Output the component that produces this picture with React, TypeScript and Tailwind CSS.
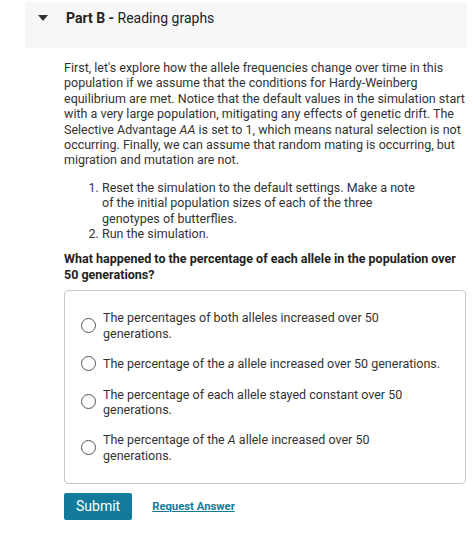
import React from 'react';

const options = [
  <>The percentages of both alleles increased over 50 generations.</>,
  <>The percentage of the <i>a</i> allele increased over 50 generations.</>,
  <>The percentage of each allele stayed constant over 50 generations.</>,
  <>The percentage of the <i>A</i> allele increased over 50 generations.</>,
];

const App: React.FC = () => {
  return (
    <div className="w-[474px] h-[537px] bg-white text-[#333] overflow-hidden" style={{ fontFamily: 'Roboto, "Liberation Sans", sans-serif' }}>
      {/* part header */}
      <div className="ml-[25px] mr-[7px] mt-[2px] h-[46px] bg-[#f7f7f7] flex items-start pt-[6px]">
        <svg className="ml-[13px] mt-[7px] w-[10px] h-[6px]" viewBox="0 0 10 6">
          <path d="M0 0 L10 0 L5 6 Z" fill="#333" />
        </svg>
        <div className="ml-[18px] text-[14px] leading-[20px] text-[#222]">
          <span className="font-bold">Part B -</span> Reading graphs
        </div>
      </div>

      <div className="ml-[64px] w-[406px] mt-[12px] text-[12.5px] leading-[15.4px]">
        <p>
          First, let's explore how the allele frequencies change over time in this population if we assume that
          the conditions for Hardy-Weinberg equilibrium are met. Notice that the default values in the simulation
          start with a very large population, mitigating any effects of genetic drift. The Selective Advantage{' '}
          <i>AA</i> is set to 1, which means natural selection is not occurring. Finally, we can assume that random
          mating is occurring, but migration and mutation are not.
        </p>

        <ol className="list-decimal pl-[38px] pr-[50px] mt-[12px]">
          <li>
            Reset the simulation to the default settings. Make a note of the initial population sizes of each of the
            three genotypes of butterflies.
          </li>
          <li>Run the simulation.</li>
        </ol>

        <p className="font-bold mt-[10px] text-[#222]">
          What happened to the percentage of each allele in the population over 50 generations?
        </p>

        <div className="mt-[8px] mr-[4px] border border-[#c8c8c8] rounded-[4px] pt-[19px] pb-[20px] pl-[16px] pr-[20px] flex flex-col gap-[15px]">
          {options.map((opt, i) => (
            <label key={i} className="flex items-center gap-[7px]">
              <span className="w-[15px] h-[15px] rounded-full border border-[#555] shrink-0 bg-white" />
              <span className="max-w-[338px]">{opt}</span>
            </label>
          ))}
        </div>

        <div className="flex items-center mt-[9px]">
          <button className="bg-[#127b9b] text-white text-[14px] h-[27px] px-[12px] rounded-[2px]">Submit</button>
          <a className="ml-[20px] text-[11.3px] font-bold text-[#127b9b] underline">Request Answer</a>
        </div>
      </div>
    </div>
  );
};

export default App;
